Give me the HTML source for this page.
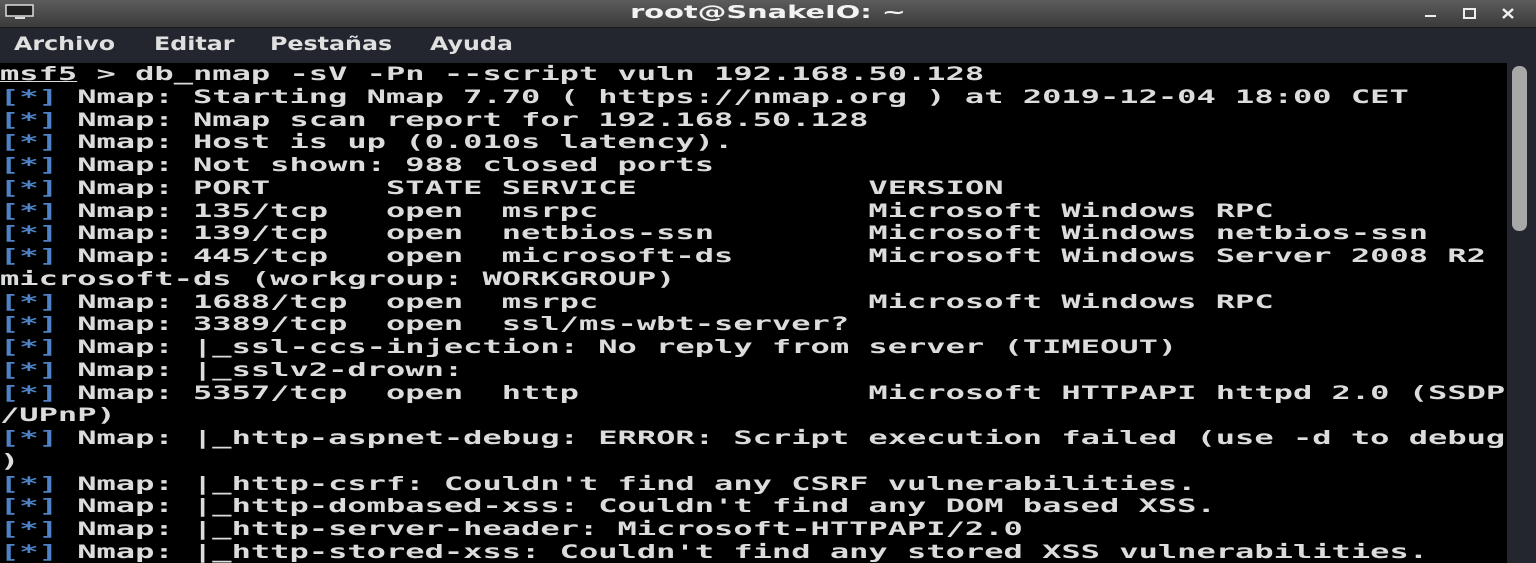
<!DOCTYPE html>
<html><head><meta charset="utf-8"><style>
*{margin:0;padding:0}
body{width:1536px;height:563px;overflow:hidden;background:#000;position:relative;font-family:"DejaVu Sans","Liberation Sans",sans-serif}
#title{position:absolute;left:0;top:0;width:1536px;height:27px;background:linear-gradient(#5c5c5c,#3a3a3a);}
#title .t{position:absolute;left:768px;top:2px;color:#f2f2f2;font-weight:bold;font-size:18px;white-space:nowrap;transform:translateX(-50%) scaleX(1.6);}
#menu{position:absolute;left:0;top:27px;width:1536px;height:36px;background:#23262e;border-top:1px solid #1a1a1a}
#menu span{position:absolute;top:5px;color:#e0e0e0;font-size:19px;font-weight:bold;transform:scaleX(1.25);transform-origin:0 0;white-space:nowrap}
#term{position:absolute;left:0;top:63px;width:1507px;height:500px;background:#000;overflow:hidden}
pre{font-family:"DejaVu Sans Mono","Liberation Mono",monospace;font-weight:bold;font-size:19px;line-height:22.75px;color:#dcdcdc;transform:scaleX(1.687);transform-origin:0 0;white-space:pre}
.b{color:#4d82c6}
#sb{position:absolute;left:1507px;top:63px;width:29px;height:500px;background:#23262e}
#thumb{position:absolute;left:1512px;top:66px;width:15px;height:165px;background:#a8a8a8;border-radius:7px}
</style></head><body>
<div id="title"><svg style="position:absolute;left:5px;top:4px" width="30" height="18"><rect x="1" y="1" width="27" height="11" fill="#222" stroke="#ddd" stroke-width="1.5"/><rect x="10" y="13" width="10" height="2" fill="#ddd"/></svg><div class="t">root@SnakeIO: ~</div>
<svg style="position:absolute;left:1420px;top:8px" width="110" height="12"><rect x="5" y="7" width="11" height="2" fill="#eee"/><rect x="44" y="1" width="11" height="9" fill="none" stroke="#eee" stroke-width="2"/><path d="M83 1 L93 10 M93 1 L83 10" stroke="#eee" stroke-width="2.5"/></svg></div>
<div id="menu"><span style="left:14px">Archivo</span><span style="left:154px">Editar</span><span style="left:270px">Pestañas</span><span style="left:430px">Ayuda</span></div>
<div id="term"><pre><u>msf5</u> &gt; db_nmap -sV -Pn --script vuln 192.168.50.128
<span class="b">[*]</span> Nmap: Starting Nmap 7.70 ( https://nmap.org ) at 2019-12-04 18:00 CET
<span class="b">[*]</span> Nmap: Nmap scan report for 192.168.50.128
<span class="b">[*]</span> Nmap: Host is up (0.010s latency).
<span class="b">[*]</span> Nmap: Not shown: 988 closed ports
<span class="b">[*]</span> Nmap: PORT      STATE SERVICE            VERSION
<span class="b">[*]</span> Nmap: 135/tcp   open  msrpc              Microsoft Windows RPC
<span class="b">[*]</span> Nmap: 139/tcp   open  netbios-ssn        Microsoft Windows netbios-ssn
<span class="b">[*]</span> Nmap: 445/tcp   open  microsoft-ds       Microsoft Windows Server 2008 R2
microsoft-ds (workgroup: WORKGROUP)
<span class="b">[*]</span> Nmap: 1688/tcp  open  msrpc              Microsoft Windows RPC
<span class="b">[*]</span> Nmap: 3389/tcp  open  ssl/ms-wbt-server?
<span class="b">[*]</span> Nmap: |_ssl-ccs-injection: No reply from server (TIMEOUT)
<span class="b">[*]</span> Nmap: |_sslv2-drown:
<span class="b">[*]</span> Nmap: 5357/tcp  open  http               Microsoft HTTPAPI httpd 2.0 (SSDP
/UPnP)
<span class="b">[*]</span> Nmap: |_http-aspnet-debug: ERROR: Script execution failed (use -d to debug
)
<span class="b">[*]</span> Nmap: |_http-csrf: Couldn't find any CSRF vulnerabilities.
<span class="b">[*]</span> Nmap: |_http-dombased-xss: Couldn't find any DOM based XSS.
<span class="b">[*]</span> Nmap: |_http-server-header: Microsoft-HTTPAPI/2.0
<span class="b">[*]</span> Nmap: |_http-stored-xss: Couldn't find any stored XSS vulnerabilities.</pre></div>
<div id="sb"></div><div id="thumb"></div>
</body></html>
